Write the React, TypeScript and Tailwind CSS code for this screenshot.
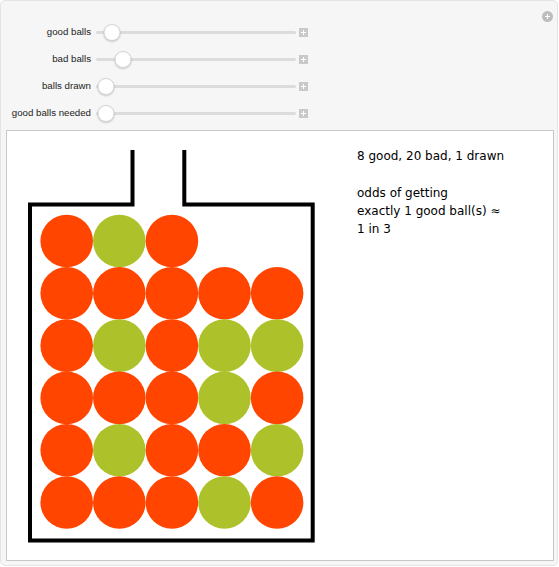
import { useState } from 'react'

type Ball = 'good' | 'bad'

const rows: Ball[][] = [
  ['bad', 'good', 'bad'],
  ['bad', 'bad', 'bad', 'bad', 'bad'],
  ['bad', 'good', 'bad', 'good', 'good'],
  ['bad', 'bad', 'bad', 'good', 'bad'],
  ['bad', 'good', 'bad', 'bad', 'good'],
  ['bad', 'bad', 'bad', 'good', 'bad'],
]

const sliders = [
  { label: 'good balls', pos: 16 },
  { label: 'bad balls', pos: 27 },
  { label: 'balls drawn', pos: 10 },
  { label: 'good balls needed', pos: 10 },
]

function PlusBox() {
  return (
    <div className="relative h-[9px] w-[9px] bg-[#c9c9c9]">
      <div className="absolute left-[2px] top-[4px] h-[1px] w-[5px] bg-white" />
      <div className="absolute left-[4px] top-[2px] h-[5px] w-[1px] bg-white" />
    </div>
  )
}

function SliderRow({ label, pos }: { label: string; pos: number }) {
  return (
    <div className="flex h-[27px] items-center">
      <div className="w-[91px] pr-[1px] text-right text-[9.7px] text-[#222]">{label}</div>
      <div className="relative ml-[4px] flex h-[17px] w-[200px] items-center">
        <div className="h-[3px] w-full rounded-full bg-[#dcdcdc]" />
        <div
          className="absolute top-0 h-[17px] w-[17px] -translate-x-1/2 rounded-full border border-[#d6d6d6] bg-white shadow-[0_1px_2px_rgba(0,0,0,0.2)]"
          style={{ left: pos }}
        />
      </div>
      <div className="ml-[3px]">
        <PlusBox />
      </div>
    </div>
  )
}

function Jar() {
  return (
    <svg width="350" height="429" viewBox="0 0 350 429" className="shrink-0">
      <path
        d="M125.5 19 V73.5 H23 V409.5 H305.7 V73.5 H177.3 V19"
        fill="none"
        stroke="#000"
        strokeWidth="4"
        strokeLinejoin="miter"
      />
      {rows.map((row, j) =>
        row.map((b, i) => (
          <circle
            key={`${j}-${i}`}
            cx={59.7 + 52.6 * i}
            cy={110 + 52.3 * j}
            r="26.3"
            fill={b === 'good' ? '#adc22a' : '#ff4500'}
          />
        ))
      )}
    </svg>
  )
}

export default function App() {
  const [open] = useState(true)

  return (
    <div className="h-[567px] w-[559px] bg-white font-['Liberation_Sans',Arial,sans-serif]">
      <div className="relative h-[566px] w-[558px] rounded-[5px] border border-[#e4e4e4] bg-[#f6f6f6]">
        <div className="absolute right-[4px] top-[10px] flex h-[11px] w-[11px] items-center justify-center rounded-full bg-[#bdbdbd]">
          <div className="absolute h-[1px] w-[5px] bg-white" />
          <div className="absolute h-[5px] w-[1px] bg-white" />
        </div>

        <div className="pt-[18px]">
          {sliders.map((s) => (
            <SliderRow key={s.label} label={s.label} pos={s.pos} />
          ))}
        </div>

        {open && (
          <div className="ml-[5px] mt-[3px] flex h-[431px] w-[548px] border border-[#c8c8c8] bg-white">
            <Jar />
            <div className="pt-[16px] font-['DejaVu_Sans',Verdana,sans-serif] text-[12px] leading-[18.3px] text-black">
              <p>8 good, 20 bad, 1 drawn</p>
              <p className="mt-[18.3px]">odds of getting</p>
              <p>exactly 1 good ball(s) ≈</p>
              <p>1 in 3</p>
            </div>
          </div>
        )}
      </div>
    </div>
  )
}
